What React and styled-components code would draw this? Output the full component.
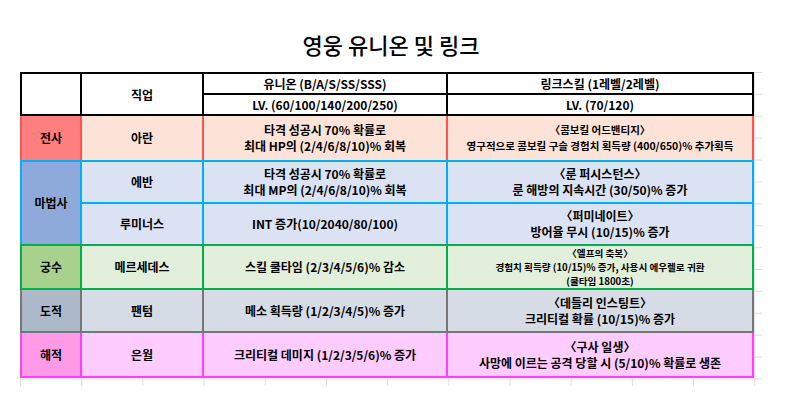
import React from 'react';
import styled, { createGlobalStyle } from 'styled-components';

const GlobalStyle = createGlobalStyle`
  body {
    margin: 0;
    background: #ffffff;
    font-family: "Noto Sans CJK KR", "Noto Sans", sans-serif;
    color: #000;
  }
`;

const groups = [
  {
    job: '전사',
    line: '#ff5252',
    head: '#ff7f7f',
    fill: '#fde3d7',
    top: false,
    bottom: false,
    rows: [
      {
        name: '아란',
        union: ['타격 성공시 70% 확률로', '최대 HP의 (2/4/6/8/10)% 회복'],
        link: ['〈콤보킬 어드밴티지〉', '영구적으로 콤보킬 구슬 경험치 획득량 (400/650)% 추가획득'],
        size: 10.5,
        height: 44,
      },
    ],
  },
  {
    job: '마법사',
    line: '#00b0f0',
    head: '#8eaadb',
    fill: '#dae2f3',
    top: true,
    bottom: false,
    rows: [
      {
        name: '에반',
        union: ['타격 성공시 70% 확률로', '최대 MP의 (2/4/6/8/10)% 회복'],
        link: ['〈룬 퍼시스턴스〉', '룬 해방의 지속시간 (30/50)% 증가'],
        height: 40,
      },
      {
        name: '루미너스',
        union: ['INT 증가(10/2040/80/100)'],
        link: ['〈퍼미네이트〉', '방어율 무시 (10/15)% 증가'],
        height: 40,
      },
    ],
  },
  {
    job: '궁수',
    line: '#00b050',
    head: '#a9d18e',
    fill: '#e2efda',
    top: true,
    bottom: true,
    rows: [
      {
        name: '메르세데스',
        union: ['스킬 쿨타임 (2/3/4/5/6)% 감소'],
        link: ['〈엘프의 축복〉', '경험치 획득량 (10/15)% 증가, 사용시 에우렐로 귀환', '(쿨타임 1800초)'],
        size: 9.6,
        lineHeight: 14,
        height: 42,
      },
    ],
  },
  {
    job: '도적',
    line: '#767676',
    head: '#adb9ca',
    fill: '#d6dce5',
    top: false,
    bottom: true,
    rows: [
      {
        name: '팬텀',
        union: ['메소 획득량 (1/2/3/4/5)% 증가'],
        link: ['〈데들리 인스팅트〉', '크리티컬 확률 (10/15)% 증가'],
        height: 41,
      },
    ],
  },
  {
    job: '해적',
    line: '#ff40ff',
    head: '#ff9be6',
    fill: '#ffccff',
    top: false,
    bottom: true,
    rows: [
      {
        name: '은월',
        union: ['크리티컬 데미지 (1/2/3/5/6)% 증가'],
        link: ['〈구사 일생〉', '사망에 이르는 공격 당할 시 (5/10)% 확률로 생존'],
        height: 43,
      },
    ],
  },
];

const Page = styled.div`
  padding: 31px 0 0 20px;
`;

const Title = styled.h1`
  width: 742px;
  margin: 0 0 15px;
  height: 26px;
  font-size: 22px;
  line-height: 26px;
  font-weight: 500;
  text-align: center;
`;

const Sheet = styled.div`
  width: 734px;
  padding: 0 8px 8px 0;
  background-color: #fff;
  background-image:
    linear-gradient(to right, #dedede 1px, transparent 1px),
    linear-gradient(to bottom, #dedede 1px, transparent 1px);
  background-size: 61.2px 21.9px;
`;

const Grid = styled.div`
  display: grid;
  grid-template-columns: 58px 120px 242px 304px;
  grid-template-rows: ${(p) => p.$rows || 'auto'};
  gap: 2px;
  background: ${(p) => p.$line};
  border-left: 2px solid ${(p) => p.$line};
  border-right: 2px solid ${(p) => p.$line};
  border-top: ${(p) => (p.$top ? `2px solid ${p.$line}` : 'none')};
  border-bottom: ${(p) => (p.$bottom ? `2px solid ${p.$line}` : 'none')};
`;

const Cell = styled.div`
  background: ${(p) => p.$bg};
  grid-row: ${(p) => (p.$span ? `span ${p.$span}` : 'auto')};
  display: flex;
  flex-direction: column;
  align-items: center;
  justify-content: center;
  text-align: center;
  overflow: hidden;
  font-weight: 700;
  font-size: ${(p) => p.$size || 12}px;
  line-height: ${(p) => p.$lh || 16}px;
  white-space: nowrap;
`;

const HeadCell = styled(Cell)`
  line-height: 19px;
`;

const Lines = ({ items }) => items.map((t) => <span key={t}>{t}</span>);

export default function App() {
  return (
    <>
      <GlobalStyle />
      <Page>
        <Title>영웅 유니온 및 링크</Title>
        <Sheet>
          <Grid $line="#000" $top $bottom $rows="19px 19px">
            <HeadCell $bg="#fff" $span={2} />
            <HeadCell $bg="#fff" $span={2}>직업</HeadCell>
            <HeadCell $bg="#fff">유니온 (B/A/S/SS/SSS)</HeadCell>
            <HeadCell $bg="#fff">링크스킬 (1레벨/2레벨)</HeadCell>
            <HeadCell $bg="#fff">LV. (60/100/140/200/250)</HeadCell>
            <HeadCell $bg="#fff">LV. (70/120)</HeadCell>
          </Grid>
          {groups.map((g) => (
            <Grid
              key={g.job}
              $line={g.line}
              $top={g.top}
              $bottom={g.bottom}
              $rows={g.rows.map((r) => `${r.height}px`).join(' ')}
            >
              <Cell $bg={g.head} $span={g.rows.length}>{g.job}</Cell>
              {g.rows.map((r) => (
                <React.Fragment key={r.name}>
                  <Cell $bg={g.fill}>{r.name}</Cell>
                  <Cell $bg={g.fill}>
                    <Lines items={r.union} />
                  </Cell>
                  <Cell $bg={g.fill} $size={r.size} $lh={r.lineHeight}>
                    <Lines items={r.link} />
                  </Cell>
                </React.Fragment>
              ))}
            </Grid>
          ))}
        </Sheet>
      </Page>
    </>
  );
}
